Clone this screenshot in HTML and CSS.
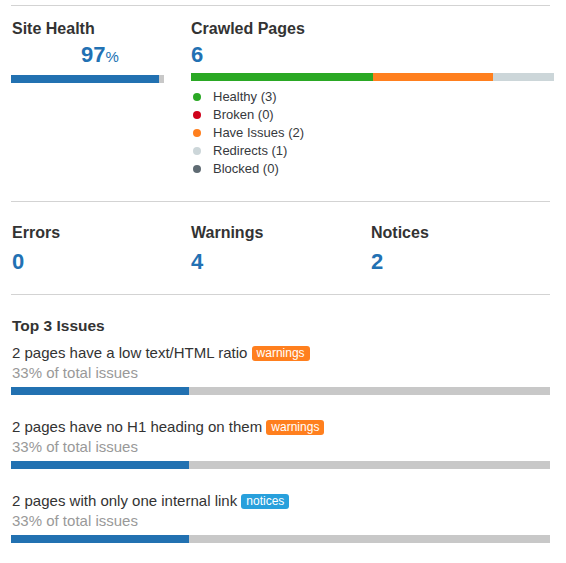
FILE: index.html
```html
<!DOCTYPE html>
<html>
<head>
<meta charset="utf-8">
<link rel="stylesheet" href="styles.css">
</head>
<body>
<div class="wrap">
  <div class="sep"></div>
  <section class="top">
    <div class="col-health">
      <h2 class="title">Site Health</h2>
      <div class="big health-num">97<span class="pct">%</span></div>
      <div class="bar"><div class="fill blue" style="width:96.7%"></div></div>
    </div>
    <div class="col-crawl">
      <h2 class="title">Crawled Pages</h2>
      <div class="big">6</div>
      <div class="bar stack">
        <div class="seg green" style="width:50%"></div>
        <div class="seg orange" style="width:33.3%"></div>
        <div class="seg lightgray" style="width:16.7%"></div>
      </div>
      <ul class="legend">
        <li><span class="dot green"></span>Healthy (3)</li>
        <li><span class="dot red"></span>Broken (0)</li>
        <li><span class="dot orange"></span>Have Issues (2)</li>
        <li><span class="dot lightgray"></span>Redirects (1)</li>
        <li><span class="dot slate"></span>Blocked (0)</li>
      </ul>
    </div>
  </section>
  <div class="sep"></div>
  <section class="counts">
    <div class="count">
      <h2 class="title">Errors</h2>
      <div class="big">0</div>
    </div>
    <div class="count">
      <h2 class="title">Warnings</h2>
      <div class="big">4</div>
    </div>
    <div class="count">
      <h2 class="title">Notices</h2>
      <div class="big">2</div>
    </div>
  </section>
  <div class="sep"></div>
  <section class="issues">
    <h3 class="issues-title">Top 3 Issues</h3>
    <div class="issue">
      <div class="issue-text">2 pages have a low text/HTML ratio <span class="badge badge-warn">warnings</span></div>
      <div class="issue-sub">33% of total issues</div>
      <div class="bar"><div class="fill blue" style="width:33%"></div></div>
    </div>
    <div class="issue">
      <div class="issue-text">2 pages have no H1 heading on them <span class="badge badge-warn">warnings</span></div>
      <div class="issue-sub">33% of total issues</div>
      <div class="bar"><div class="fill blue" style="width:33%"></div></div>
    </div>
    <div class="issue">
      <div class="issue-text">2 pages with only one internal link <span class="badge badge-notice">notices</span></div>
      <div class="issue-sub">33% of total issues</div>
      <div class="bar"><div class="fill blue" style="width:33%"></div></div>
    </div>
  </section>
</div>
</body>
</html>
```
FILE: styles.css
```css
* { box-sizing: border-box; }
html, body { margin: 0; padding: 0; background: #fff; }
body {
  font-family: "Liberation Sans", Arial, sans-serif;
  color: #333;
}
.wrap {
  padding: 5px 0 0 11px;
  width: 566px;
}
.sep {
  width: 539px;
  height: 1px;
  background: #d3d3d3;
}
.title {
  margin: 0;
  font-size: 16px;
  font-weight: bold;
  line-height: 20px;
  color: #333;
  padding-left: 1px;
}
.big {
  font-size: 22px;
  font-weight: bold;
  line-height: 26px;
  color: #2271b3;
  padding-left: 1px;
}
.col-crawl .title,
.col-crawl .big,
.count + .count .title,
.count + .count .big { padding-left: 0; }
.pct {
  font-size: 15px;
  font-weight: normal;
}
.top {
  display: grid;
  grid-template-columns: 153px 363px;
  column-gap: 27px;
  padding-top: 13px;
  padding-bottom: 23px;
}
.top .big { margin-top: 3px; }
.health-num { padding-left: 70px; }
.bar {
  height: 8px;
  background: #c8c8c8;
  display: flex;
}
.top .bar { margin-top: 5px; }
.fill { height: 100%; }
.seg { height: 100%; }
.blue { background: #2271b1; }
.green { background: #2aa824; }
.orange { background: #ff7f1e; }
.red { background: #d0021b; }
.lightgray { background: #ccd6d9; }
.slate { background: #5f6b73; }
.legend {
  list-style: none;
  margin: 7px 0 0 0;
  padding: 0;
}
.legend li {
  display: flex;
  align-items: center;
  font-size: 13px;
  line-height: 18px;
  color: #36393d;
}
.dot {
  width: 8px;
  height: 8px;
  border-radius: 50%;
  margin: 0 12px 0 2px;
  flex: none;
}
.counts {
  display: grid;
  grid-template-columns: 180px 180px 179px;
  padding: 21px 0 19px 0;
}
.counts .big { margin-top: 6px; }
.issues { padding-top: 21px; }
.issues-title {
  margin: 0 0 7px 0;
  font-size: 15.5px;
  font-weight: bold;
  line-height: 20px;
  padding-left: 1px;
}
.issue { width: 539px; }
.issue + .issue { margin-top: 22px; }
.issue-text {
  font-size: 15px;
  line-height: 20px;
  color: #333;
  padding-left: 1px;
}
.issue-sub {
  font-size: 15px;
  line-height: 20px;
  color: #999;
  padding-left: 1px;
}
.issue .bar { margin-top: 4px; }
.badge {
  display: inline-block;
  font-size: 12px;
  line-height: 15px;
  height: 15px;
  padding: 0 5px;
  border-radius: 3px;
  color: #fff;
  vertical-align: 1px;
}
.badge-warn { background: #ff7f1e; }
.badge-notice { background: #28a0dc; }
```
